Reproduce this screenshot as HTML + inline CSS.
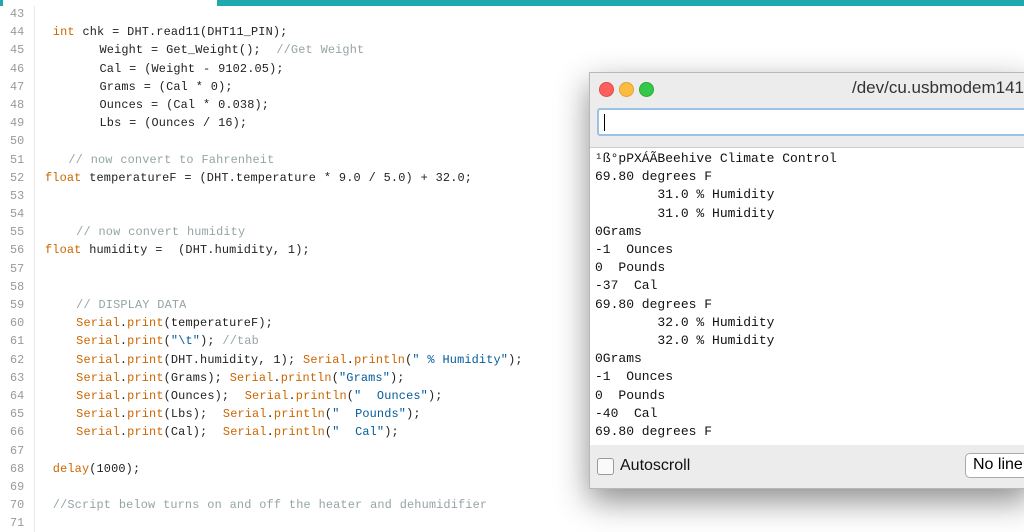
<!DOCTYPE html>
<html><head><meta charset="utf-8"><style>
body{margin:0;width:1024px;height:532px;overflow:hidden;background:#fff;position:relative;font-family:"Liberation Mono",monospace}
.top{position:absolute;left:217px;top:0;width:807px;height:6px;background:#1fa8ad}
.topl{position:absolute;left:0;top:0;width:3px;height:6px;background:#1fa8ad}
.gut{position:absolute;left:34px;top:6px;width:1px;height:526px;background:#e8e8e8}
.nums{position:absolute;left:10px;top:5px;margin:0;font-size:11.8px;line-height:18.18px;color:#999}
.code{position:absolute;left:45px;top:5px;margin:0;font-family:"Liberation Mono",monospace;font-size:11.9px;word-spacing:0.5px;letter-spacing:0.15px;line-height:18.18px;color:#222;white-space:pre}
.k{color:#cc6600}.s{color:#005c99}.c{color:#95a5a6}
.win{position:absolute;left:589px;top:72px;width:440px;height:415px;background:#ececec;border:1px solid #b8b8b8;box-shadow:0 12px 30px rgba(0,0,0,.45)}
.tl{position:absolute;top:9px;width:13px;height:13px;border-radius:50%}
.title{position:absolute;left:262px;top:5px;font-family:"Liberation Sans",sans-serif;font-size:17px;color:#333;white-space:nowrap}
.inp{position:absolute;left:7px;top:35px;width:440px;height:28px;background:#fff;border:2px solid #9cc0e6;border-radius:3px;box-sizing:border-box}
.caret{position:absolute;left:5px;top:4px;width:1px;height:17px;background:#000}
.out{position:absolute;left:0;top:74px;width:440px;height:297px;background:#fff;border-top:1px solid #ccc}
.out pre{margin:0;position:absolute;left:5px;top:2px;font-size:13px;line-height:18.2px;color:#111}
.cb{position:absolute;left:7px;top:385px;width:15px;height:15px;border:1px solid #999;border-radius:3px;background:#fafafa}
.as{position:absolute;left:30px;top:384px;font-family:"Liberation Sans",sans-serif;font-size:16px;color:#111}
.btn{position:absolute;left:375px;top:380px;width:80px;height:25px;border:1px solid #aaa;border-radius:5px;background:#fff;font-family:"Liberation Sans",sans-serif;font-size:16px;padding:2px 0 0 7px;box-sizing:border-box;white-space:nowrap;overflow:hidden}
</style></head><body>
<div class="top"></div><div class="topl"></div><div class="gut"></div>
<pre class="nums">43
44
45
46
47
48
49
50
51
52
53
54
55
56
57
58
59
60
61
62
63
64
65
66
67
68
69
70
71</pre>
<div class="code">&nbsp;
 <span class="k">int</span> chk = DHT.read11(DHT11_PIN);
       Weight = Get_Weight();  <span class="c">//Get Weight</span>
       Cal = (Weight - 9102.05);
       Grams = (Cal * 0);
       Ounces = (Cal * 0.038);
       Lbs = (Ounces / 16);

   <span class="c">// now convert to Fahrenheit</span>
<span class="k">float</span> temperatureF = (DHT.temperature * 9.0 / 5.0) + 32.0;


    <span class="c">// now convert humidity</span>
<span class="k">float</span> humidity =  (DHT.humidity, 1);


    <span class="c">// DISPLAY DATA</span>
    <span class="k">Serial</span>.<span class="k">print</span>(temperatureF);
    <span class="k">Serial</span>.<span class="k">print</span>(<span class="s">"\t"</span>); <span class="c">//tab</span>
    <span class="k">Serial</span>.<span class="k">print</span>(DHT.humidity, 1); <span class="k">Serial</span>.<span class="k">println</span>(<span class="s">" % Humidity"</span>);
    <span class="k">Serial</span>.<span class="k">print</span>(Grams); <span class="k">Serial</span>.<span class="k">println</span>(<span class="s">"Grams"</span>);
    <span class="k">Serial</span>.<span class="k">print</span>(Ounces);  <span class="k">Serial</span>.<span class="k">println</span>(<span class="s">"  Ounces"</span>);
    <span class="k">Serial</span>.<span class="k">print</span>(Lbs);  <span class="k">Serial</span>.<span class="k">println</span>(<span class="s">"  Pounds"</span>);
    <span class="k">Serial</span>.<span class="k">print</span>(Cal);  <span class="k">Serial</span>.<span class="k">println</span>(<span class="s">"  Cal"</span>);

 <span class="k">delay</span>(1000);

 <span class="c">//Script below turns on and off the heater and dehumidifier</span>
</div>
<div class="win">
<div class="tl" style="left:9px;background:#fc605c;border:1px solid #de4a45"></div>
<div class="tl" style="left:29px;background:#fdbc40;border:1px solid #dea236"></div>
<div class="tl" style="left:49px;background:#34c84a;border:1px solid #27aa35"></div>
<div class="title">/dev/cu.usbmodem1411</div>
<div class="inp"><div class="caret"></div></div>
<div class="out"><pre>¹ß°pPXÁÃBeehive Climate Control
69.80 degrees F
        31.0 % Humidity
        31.0 % Humidity
0Grams
-1  Ounces
0  Pounds
-37  Cal
69.80 degrees F
        32.0 % Humidity
        32.0 % Humidity
0Grams
-1  Ounces
0  Pounds
-40  Cal
69.80 degrees F</pre></div>
<div class="cb"></div><div class="as">Autoscroll</div>
<div class="btn">No line ending</div>
</div>
</body></html>
